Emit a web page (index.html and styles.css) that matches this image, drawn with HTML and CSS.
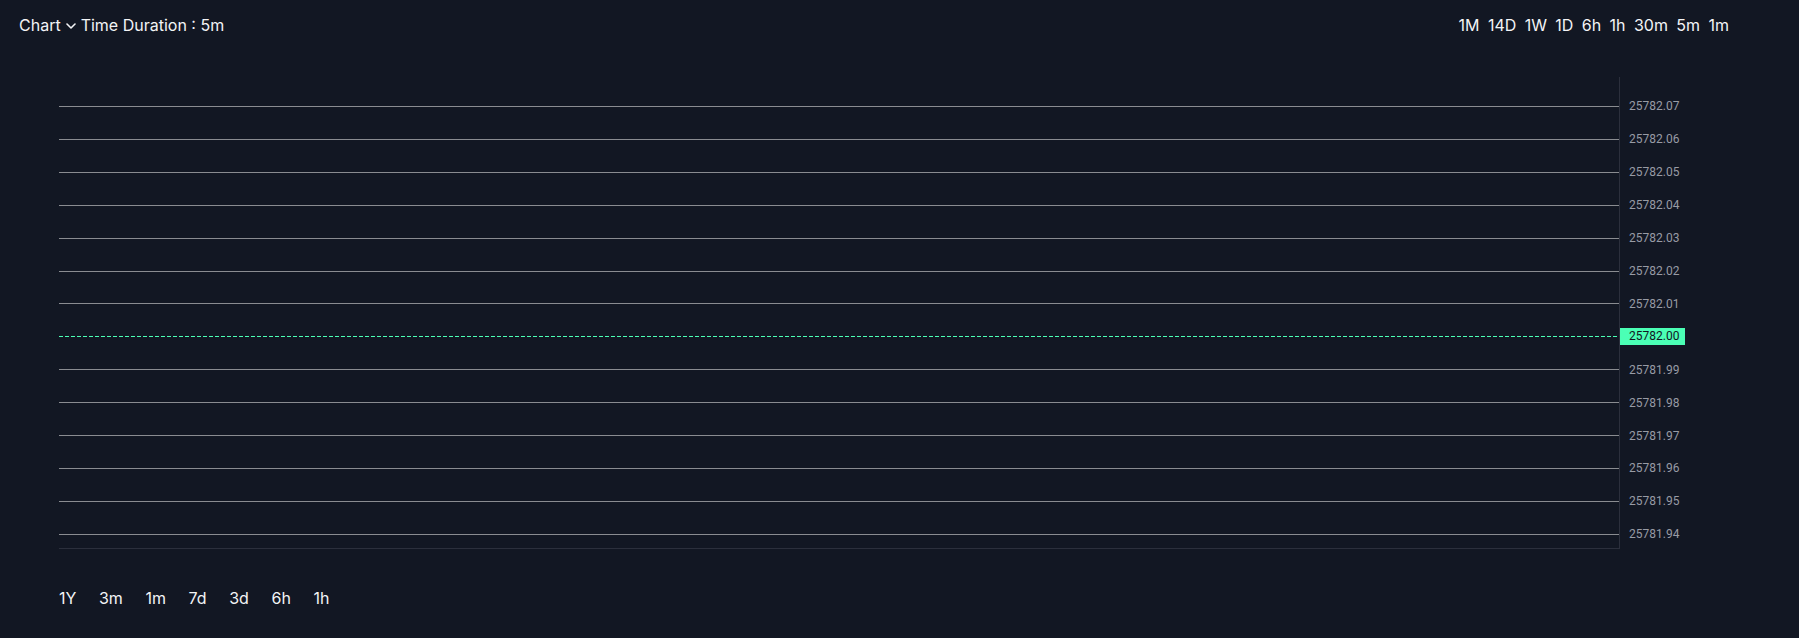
FILE: index.html
```html
<!DOCTYPE html>
<html>
<head>
<meta charset="utf-8">
<link rel="stylesheet" href="styles.css">
</head>
<body>
<div class="app">
  <header class="topbar">
    <div class="left">
      <span class="title">Chart</span>
      <svg class="chev" width="10" height="6" viewBox="0 0 10 6"><path d="M1 1 L5 5 L9 1" fill="none" stroke="#f3f4f6" stroke-width="1.6" stroke-linecap="round" stroke-linejoin="round"/></svg>
      <span class="title">Time Duration : 5m</span>
    </div>
    <nav class="ranges">
      <span>1M</span><span>14D</span><span>1W</span><span>1D</span><span>6h</span><span>1h</span><span>30m</span><span>5m</span><span>1m</span>
    </nav>
  </header>
  <section class="chart">
    <div class="pane">
      <div class="row"></div><div class="row"></div><div class="row"></div><div class="row"></div>
      <div class="row"></div><div class="row"></div><div class="row"></div>
      <div class="row dashed"></div>
      <div class="row"></div><div class="row"></div><div class="row"></div><div class="row"></div>
      <div class="row"></div><div class="row last"></div>
    </div>
    <div class="axis">
      <div class="lbl">25782.07</div>
      <div class="lbl">25782.06</div>
      <div class="lbl">25782.05</div>
      <div class="lbl">25782.04</div>
      <div class="lbl">25782.03</div>
      <div class="lbl">25782.02</div>
      <div class="lbl">25782.01</div>
      <div class="lbl"><span class="cur">25782.00</span></div>
      <div class="lbl">25781.99</div>
      <div class="lbl">25781.98</div>
      <div class="lbl">25781.97</div>
      <div class="lbl">25781.96</div>
      <div class="lbl">25781.95</div>
      <div class="lbl">25781.94</div>
    </div>
  </section>
  <footer class="periods">
    <span>1Y</span><span>3m</span><span>1m</span><span>7d</span><span>3d</span><span>6h</span><span>1h</span>
  </footer>
</div>
</body>
</html>
```
FILE: styles.css
```css
html, body {
  margin: 0;
  padding: 0;
  background: #121723;
  height: 100%;
}
.app {
  font-family: Inter, "Noto Sans", sans-serif;
  color: #f3f4f6;
  font-size: 16px;
  line-height: 24px;
  height: 638px;
  overflow: hidden;
}
.topbar {
  height: 50px;
  box-sizing: border-box;
  padding: 13px 70px 0 19px;
  display: flex;
  justify-content: space-between;
}
.left {
  display: flex;
  align-items: center;
  height: 24px;
}
.chev {
  margin: 1px 5px 0 5px;
}
.ranges {
  display: flex;
  gap: 8.4px;
}
.chart {
  margin-top: 27px;
  padding-left: 59px;
  display: flex;
  height: 472px;
}
.pane {
  width: 1560px;
  box-sizing: border-box;
  padding-top: 29px;
  border-bottom: 1px solid #2b2f3c;
  display: flex;
  flex-direction: column;
}
.row {
  height: 32.92px;
  flex: none;
  box-sizing: border-box;
  border-top: 1px solid #8a8c91;
}
.row.last {
  height: 14px;
}
.row.dashed {
  border-top: none;
  background: repeating-linear-gradient(to right, #4bffb5 0 4px, transparent 4px 6px) top left / 100% 1px no-repeat;
}
.axis {
  width: 110px;
  border-left: 1px solid #2b2f3c;
  padding-top: 13px;
  box-sizing: border-box;
  font-family: Roboto, "Liberation Sans", sans-serif;
  font-size: 12px;
  color: #989ba5;
}
.lbl {
  height: 32.92px;
  display: flex;
  align-items: center;
  padding-left: 9px;
  white-space: nowrap;
}
.cur {
  margin-left: -9px;
  background: #4bffb5;
  color: #111722;
  padding: 0 6px 0 9px;
  line-height: 17px;
  height: 17px;
}
.periods {
  padding: 37px 0 0 59px;
  display: flex;
  gap: 22.6px;
}
```
